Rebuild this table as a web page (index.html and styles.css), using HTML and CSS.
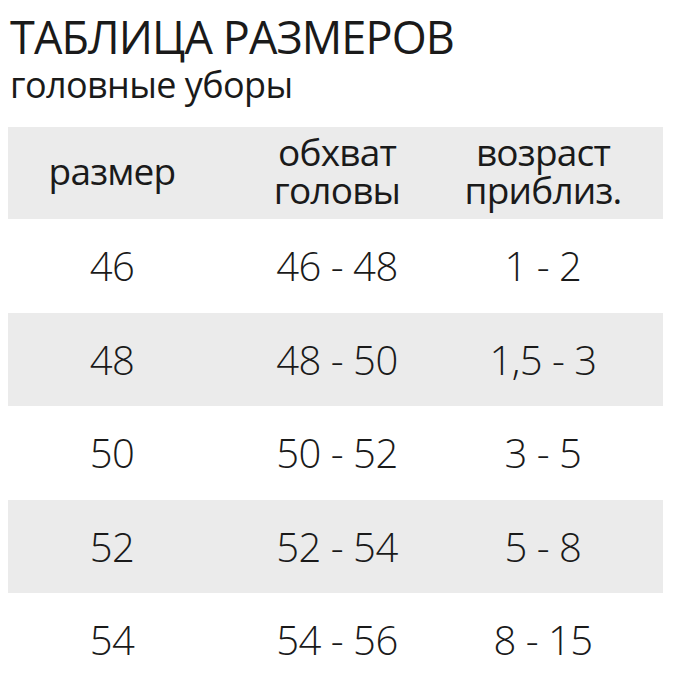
FILE: index.html
```html
<!DOCTYPE html>
<html lang="ru">
<head>
<meta charset="utf-8">
<link rel="stylesheet" href="styles.css">
</head>
<body>
<div class="page">
  <header class="head">
    <h1 class="title">ТАБЛИЦА РАЗМЕРОВ</h1>
    <p class="subtitle">головные уборы</p>
  </header>
  <div class="table">
    <div class="row row-head shade">
      <div class="cell">размер</div>
      <div class="cell">обхват<br>головы</div>
      <div class="cell">возраст<br>приблиз.</div>
    </div>
    <div class="row">
      <div class="cell">46</div>
      <div class="cell">46 - 48</div>
      <div class="cell">1 - 2</div>
    </div>
    <div class="row shade">
      <div class="cell">48</div>
      <div class="cell">48 - 50</div>
      <div class="cell">1,5 - 3</div>
    </div>
    <div class="row">
      <div class="cell">50</div>
      <div class="cell">50 - 52</div>
      <div class="cell">3 - 5</div>
    </div>
    <div class="row shade">
      <div class="cell">52</div>
      <div class="cell">52 - 54</div>
      <div class="cell">5 - 8</div>
    </div>
    <div class="row">
      <div class="cell">54</div>
      <div class="cell">54 - 56</div>
      <div class="cell">8 - 15</div>
    </div>
  </div>
</div>
</body>
</html>
```

FILE: styles.css
```css
html, body {
  margin: 0;
  padding: 0;
  background: #ffffff;
}
.page {
  width: 675px;
  height: 699px;
  box-sizing: border-box;
  padding: 12px 12px 0 8px;
  font-family: "Open Sans", "Noto Sans", sans-serif;
  color: #1a1a1a;
  display: flex;
  flex-direction: column;
}
.head {
  padding-left: 2px;
}
.title {
  margin: 0;
  font-weight: 400;
  font-size: 45px;
  line-height: 50px;
  letter-spacing: -0.9px;
}
.subtitle {
  margin: 0;
  font-size: 36px;
  line-height: 45px;
  letter-spacing: -0.6px;
}
.table {
  margin-top: 20px;
  display: flex;
  flex-direction: column;
}
.row {
  display: grid;
  grid-template-columns: 208px 242px 170px 1fr;
  height: 93.5px;
  align-items: center;
  font-size: 40px;
  font-weight: 300;
  letter-spacing: -0.5px;
}
.row-head {
  height: 92px;
  box-sizing: border-box;
  padding-bottom: 4px;
  font-weight: 400;
  font-size: 37px;
  line-height: 38px;
  letter-spacing: -0.8px;
}
.shade {
  background: #ebebeb;
}
.cell {
  text-align: center;
}
```
